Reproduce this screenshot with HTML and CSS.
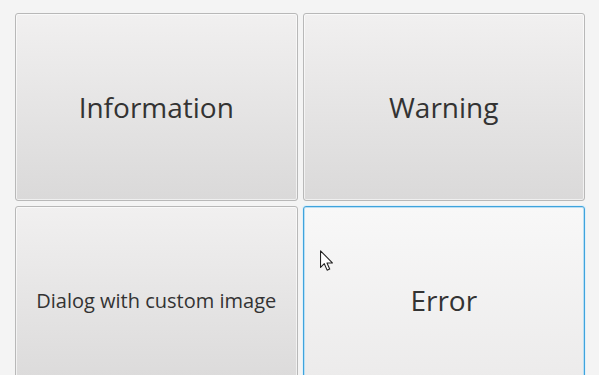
FILE: index.html
```html
<!DOCTYPE html>
<html>
<head>
<meta charset="utf-8">
<link rel="stylesheet" href="styles.css">
</head>
<body>
<div class="grid">
  <button class="btn big">Information</button>
  <button class="btn big">Warning</button>
  <button class="btn small">Dialog with custom image</button>
  <button class="btn big focus">Error</button>
</div>
<svg class="cursor" width="14" height="22" viewBox="0 0 13 20">
  <path d="M0.5 0.5 L0.5 16 L4 12.5 L6.6 18.5 L9 17.5 L6.5 11.8 L11.5 11.8 Z" fill="#fff" stroke="#222" stroke-width="1" stroke-linejoin="round"/>
</svg>
</body>
</html>
```
FILE: styles.css
```css
html, body {
  margin: 0;
  padding: 0;
  width: 599px;
  height: 375px;
  overflow: hidden;
  background: #f4f4f4;
}
.grid {
  display: grid;
  grid-template-columns: 1fr 1fr;
  grid-template-rows: 188px 188px;
  gap: 5px;
  padding: 13px 14px 0 15px;
}
.btn {
  border: 1px solid #b8b8b8;
  border-radius: 3px;
  background: linear-gradient(#f1f0f0, #dad9d9);
  color: #333;
  font-family: "Open Sans", "Noto Sans", sans-serif;
  padding: 0;
  margin: 0;
  box-shadow: inset 0 0 0 1px rgba(255,255,255,0.6);
}
.big { font-size: 28px; }
.small { font-size: 20px; }
.focus {
  border: 1px solid #3fa3dc;
  background: linear-gradient(#f8f8f8, #ebeaea);
  box-shadow: inset 0 0 0 1px #b9def3, 0 0 0 1px #dff0fa;
}
.cursor {
  position: absolute;
  left: 320px;
  top: 250px;
}
```
